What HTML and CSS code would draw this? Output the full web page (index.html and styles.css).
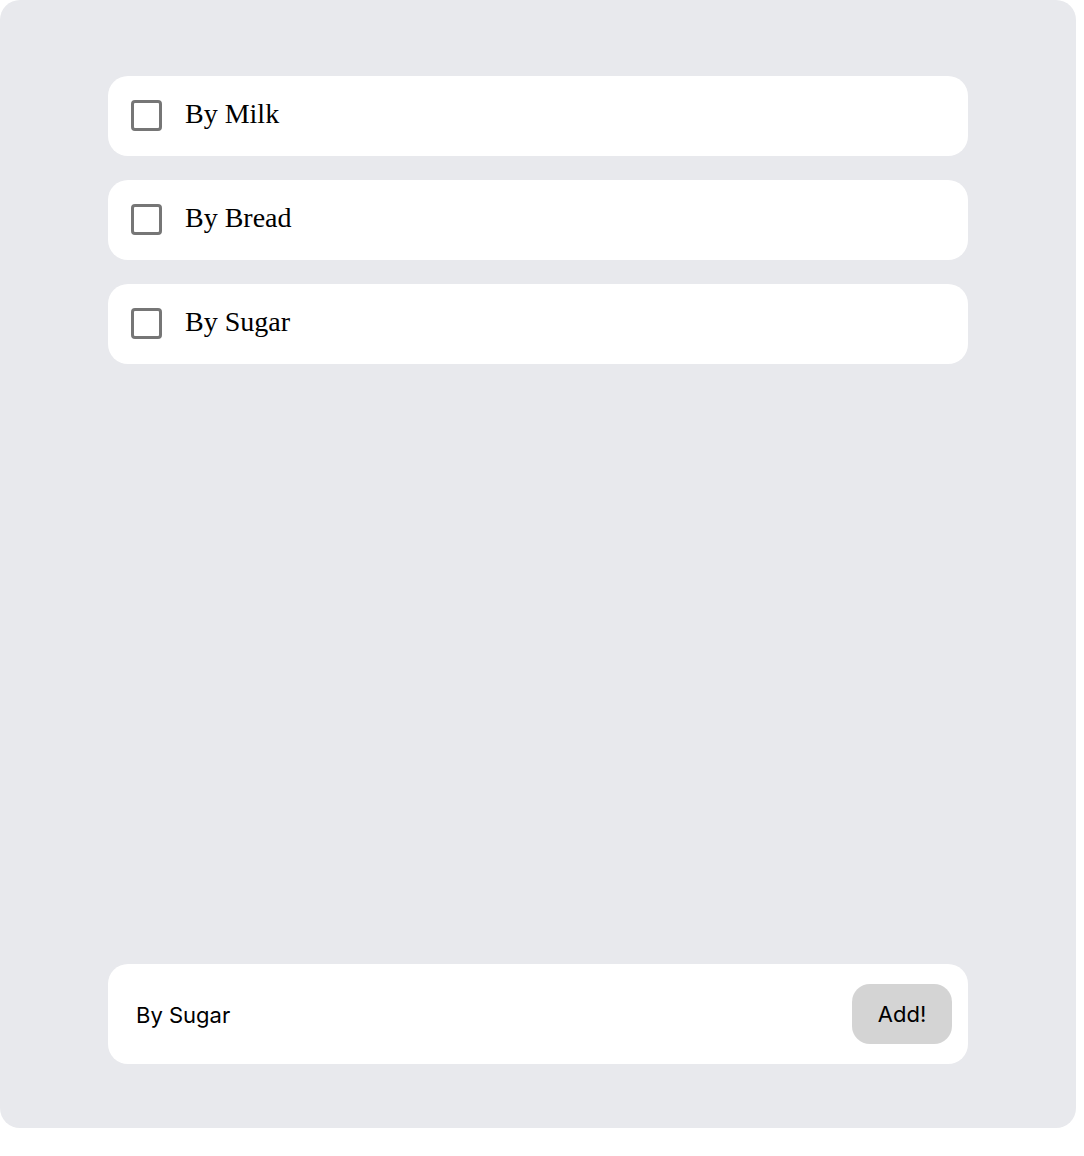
FILE: index.html
```html
<!DOCTYPE html>
<html>
<head>
<meta charset="utf-8">
<link rel="stylesheet" href="styles.css">
</head>
<body>
<div class="app">
  <ul class="list">
    <li class="item"><span class="check"></span><span class="label">By Milk</span></li>
    <li class="item"><span class="check"></span><span class="label">By Bread</span></li>
    <li class="item"><span class="check"></span><span class="label">By Sugar</span></li>
  </ul>
  <form class="add-form">
    <span class="input">By Sugar</span>
    <span class="btn">Add!</span>
  </form>
</div>
</body>
</html>
```
FILE: styles.css
```css
html, body {
  margin: 0;
  padding: 0;
  background: #ffffff;
}
.app {
  box-sizing: border-box;
  width: 1076px;
  height: 1128px;
  background: #e8e9ed;
  border-radius: 20px;
  padding: 76px 108px 64px 108px;
  display: flex;
  flex-direction: column;
  justify-content: space-between;
}
.list {
  list-style: none;
  margin: 0;
  padding: 0;
  display: flex;
  flex-direction: column;
  gap: 24px;
}
.item {
  height: 80px;
  background: #ffffff;
  border-radius: 20px;
  display: flex;
  align-items: center;
  padding-left: 23px;
  box-sizing: border-box;
}
.check {
  box-sizing: border-box;
  width: 31px;
  height: 31px;
  border: 3px solid #767676;
  border-radius: 4px;
  margin-top: -1px;
  flex: none;
}
.label {
  font-family: "Liberation Serif", "Times New Roman", serif;
  font-size: 28px;
  color: #000;
  margin-left: 23px;
  margin-top: -4px;
}
.add-form {
  margin: 0;
  height: 100px;
  background: #ffffff;
  border-radius: 20px;
  display: flex;
  align-items: center;
  justify-content: space-between;
  padding: 0 16px 0 28px;
  box-sizing: border-box;
}
.input {
  font-family: Inter, "Noto Sans", sans-serif;
  font-size: 22px;
  color: #000;
  margin-top: 2px;
}
.btn {
  width: 100px;
  height: 60px;
  background: #d4d4d4;
  border-radius: 18px;
  display: flex;
  align-items: center;
  justify-content: center;
  font-family: Inter, "Noto Sans", sans-serif;
  font-size: 22px;
  color: #000;
}
```
